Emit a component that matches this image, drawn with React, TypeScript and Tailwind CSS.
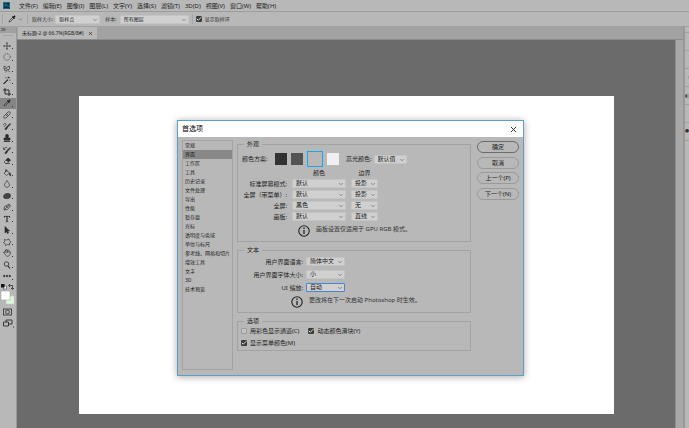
import type { ReactNode } from "react";
import clsx from "clsx";
import { Check, ChevronDown, X } from "lucide-react";

const menus = [
  "文件(F)",
  "编辑(E)",
  "图像(I)",
  "图层(L)",
  "文字(Y)",
  "选择(S)",
  "滤镜(T)",
  "3D(D)",
  "视图(V)",
  "窗口(W)",
  "帮助(H)",
];

const categories = [
  "常规",
  "界面",
  "工作区",
  "工具",
  "历史记录",
  "文件处理",
  "导出",
  "性能",
  "暂存盘",
  "光标",
  "透明度与色域",
  "单位与标尺",
  "参考线、网格和切片",
  "增效工具",
  "文字",
  "3D",
  "技术预览",
];

const screenModes = [
  { label: "标准屏幕模式:", color: "默认", border: "投影" },
  { label: "全屏（带菜单）:", color: "默认", border: "投影" },
  { label: "全屏:", color: "黑色", border: "无" },
  { label: "画板:", color: "默认", border: "直线" },
];

const swatches = [
  { name: "深色", color: "bg-[#323232]" },
  { name: "中灰", color: "bg-[#535353]" },
  { name: "浅灰", color: "bg-[#b8b8b8]" },
  { name: "亮色", color: "bg-[#f0f0f0]" },
];

const eyedropper = (
  <>
    <path d="M2 14l1-3 6-6 2 2-6 6z" fill="none" />
    <path d="M8 4l4 4 1-1-1-1 2-2c1-2-1-3-2-2l-2 2-1-1z" />
  </>
);

const tools: { name: string; art: ReactNode }[] = [
  {
    name: "移动",
    art: (
      <>
        <path d="M8 2v12M2 8h12" />
        <path d="M8 0l2 3H6zM8 16l2-3H6zM0 8l3-2v4zM16 8l-3-2v4z" stroke="none" />
      </>
    ),
  },
  { name: "椭圆选框", art: <circle cx="8" cy="8" r="6.5" fill="none" strokeDasharray="2.6 1.6" /> },
  {
    name: "快速套索",
    art: (
      <path d="M2 2l5 3 6-3v6l-4 2-2-3-5 1zM4 8c-3 2 0 4 2 3s1 3-1 4M9 10l5 4" fill="none" />
    ),
  },
  {
    name: "魔棒",
    art: (
      <>
        <path d="M1 15l8-8 1 1-8 8z" />
        <path d="M11 1v4M9 3h5M14 7v3M6 2v3M13 12l1 1" fill="none" />
      </>
    ),
  },
  { name: "裁剪", art: <path d="M4 0v12h12M0 4h12v12" fill="none" strokeWidth="2" /> },
  { name: "吸管", art: eyedropper },
  {
    name: "修复画笔",
    art: <path d="M2 10l8-8c3-2 6 1 4 4l-8 8c-3 2-6-1-4-4zM5 7l4 4M7 5l4 4M7 8h2" fill="none" />,
  },
  {
    name: "画笔",
    art: (
      <>
        <path d="M6 11l8-8 1 1-7 8zM4 15c0-3 2-4 4-3 0 2-1 3-4 3z" />
        <path d="M1 6c0-4 5-4 5-1s-4 2-4 5" fill="none" />
      </>
    ),
  },
  { name: "仿制图章", art: <path d="M6 8L5 3c0-3 6-3 6 0l-1 5h4v4H2V8zM2 14h12v1H2z" /> },
  {
    name: "历史画笔",
    art: (
      <>
        <path d="M6 11l8-8 1 1-7 8zM4 15c0-3 2-4 4-3 0 2-1 3-4 3z" />
        <path d="M1 3v4h4M2 6c1-4 5-4 7-2" fill="none" />
      </>
    ),
  },
  {
    name: "橡皮擦",
    art: (
      <>
        <path d="M6 6l4-4 5 4-4 4z" />
        <path d="M6 6l-4 4 3 3h3l3-3M5 13h9" fill="none" />
      </>
    ),
  },
  {
    name: "油漆桶",
    art: (
      <>
        <path d="M2 8l6-5 5 5-6 5zM5 6V2c0-2 3-1 3 1v3" fill="none" />
        <path d="M13 8c3 1 3 4 2 6-2-1-2-3-2-6z" />
      </>
    ),
  },
  { name: "模糊", art: <path d="M8 1c2 4 5 6 5 9 0 6-10 6-10 0 0-3 3-5 5-9z" fill="none" /> },
  {
    name: "海绵",
    art: <path d="M2 6c2-3 9-4 12-2 1 3 1 6-1 8-3 1-8 2-11 0-1-2-1-4 0-6z" fill="#444" />,
  },
  {
    name: "钢笔",
    art: (
      <>
        <path d="M2 14l1-7 6-3 4 4-4 5zM2 14l5-5M10 3l4 4 1-2-3-3z" fill="none" />
        <circle cx="8" cy="8" r="1" />
      </>
    ),
  },
  {
    name: "文字",
    art: <path d="M2 2h12v3h-1l-1-2H9v10l2 1H5l2-1V3H4L3 5H2z" strokeWidth="0.3" />,
  },
  { name: "路径选择", art: <path d="M4 1l9 9H9l2 4-2 1-2-4-3 3z" /> },
  {
    name: "自定形状",
    art: <path d="M3 3l4 1 5-2 1 3 3 3-3 2v4l-4-1-4 2-1-4-3-2 3-3z" fill="none" />,
  },
  {
    name: "抓手",
    art: (
      <path
        d="M4 10L1 7c0-2 2-1 3 0V4c0-2 2-2 2 0V2c0-2 2-2 3 0v1c1-2 3-1 3 1v1c2-1 3 0 3 2-1 9-8 10-11 3zM6 4v4M9 3v5M12 5v3"
        fill="none"
      />
    ),
  },
  {
    name: "缩放",
    art: (
      <>
        <circle cx="7" cy="6" r="4.5" fill="none" strokeWidth="1.6" />
        <path d="M10 10l4 5" strokeWidth="2.4" />
      </>
    ),
  },
  {
    name: "更多",
    art: (
      <>
        <circle cx="2.5" cy="8" r="1.6" />
        <circle cx="8" cy="8" r="1.6" />
        <circle cx="13.5" cy="8" r="1.6" />
      </>
    ),
  },
];

const Glyph = ({ children, className = "size-2" }: { children: ReactNode; className?: string }) => (
  <svg
    viewBox="0 0 16 16"
    className={className}
    fill="currentColor"
    stroke="currentColor"
    strokeWidth="1.3"
    aria-hidden="true"
  >
    {children}
  </svg>
);

type DropdownProps = {
  label: string;
  value: string;
  width: string;
  focused?: boolean;
  small?: boolean;
};

const Dropdown = ({ label, value, width, focused, small }: DropdownProps) => (
  <span className={clsx("relative block shrink-0", width)}>
    <select
      aria-label={label}
      className={clsx(
        "block h-[9px] w-full appearance-none rounded-[1px] border bg-[#d0d0d0] pl-[3px] leading-[7px] text-[#151515] outline-none",
        small ? "text-[5px]" : "text-[6px]",
        focused ? "border-[#4a86cf]" : "border-[#c4c4c4]"
      )}
    >
      <option>{value}</option>
    </select>
    <ChevronDown className="pointer-events-none absolute right-[2px] top-[2px] size-[6px] text-[#444]" />
  </span>
);

const Checkbox = ({ label, checked }: { label: string; checked?: boolean }) => (
  <label className="flex h-2 items-center gap-[3px] whitespace-nowrap">
    <span className="relative block size-[6px]">
      <input
        type="checkbox"
        defaultChecked={checked}
        className="peer block size-[6px] appearance-none rounded-[1px] border border-[#9a9a9a] bg-[#c4c4c4] checked:border-[#3a3a3a] checked:bg-[#3a3a3a]"
      />
      <Check
        strokeWidth={4}
        className="pointer-events-none absolute inset-0 hidden size-[6px] text-[#e4e4e4] peer-checked:block"
      />
    </span>
    {label}
  </label>
);

const Group = ({ title, children }: { title: string; children: ReactNode }) => (
  <fieldset className="min-w-0 border border-[#a3a3a3]">
    <legend className="ml-[6px] px-[3px] leading-[8px]">{title}</legend>
    {children}
  </fieldset>
);

const Info = ({ children }: { children: ReactNode }) => (
  <div className="flex h-[13px] items-start gap-[6px] whitespace-nowrap text-[#333]">
    <svg viewBox="0 0 12 12" className="size-3 shrink-0 text-[#222]" fill="none" stroke="currentColor" aria-hidden="true">
      <circle cx="6" cy="6" r="5.2" strokeWidth="1.1" />
      <path d="M6 5v4M6 2.6v1.3" strokeWidth="1.3" />
    </svg>
    <p className="leading-[8px]">{children}</p>
  </div>
);

const MenuBar = () => (
  <nav className="flex h-[11px] items-center pl-[3px] text-[6px] leading-[8px] text-[#222]">
    <svg viewBox="0 0 14 14" className="mr-2 size-[7px]" aria-label="Photoshop">
      <rect width="14" height="14" fill="#0a2433" />
      <rect x="0.7" y="0.7" width="12.6" height="12.6" fill="none" stroke="#1f9cc4" strokeWidth="1.2" />
      <path d="M4 10.5V3.8h2c2.5 0 2.5 3.4 0 3.4H4" fill="none" stroke="#2bb6e8" />
      <path d="M11 6.2c-2.5-.7-2.5 1.4-1 1.7 1.8.4 1 2.6-1.6 1.8" fill="none" stroke="#2bb6e8" />
    </svg>
    <div className="flex items-center gap-[3px]">
      {menus.map((menu) => (
        <button key={menu} type="button" className="px-px whitespace-nowrap">
          {menu}
        </button>
      ))}
    </div>
  </nav>
);

const OptionsBar = () => (
  <div className="flex h-[15px] items-center border-t border-[#9d9d9d] pl-[2px] text-[5px] leading-[8px] text-[#333]">
    <span className="mr-[5px] h-[10px] w-px bg-[#a6a6a6]" />
    <Glyph className="size-2 text-[#222]">{eyedropper}</Glyph>
    <ChevronDown className="ml-[2px] size-[5px]" />
    <span className="mx-1 h-[10px] w-px bg-[#a6a6a6]" />
    <span className="mr-[2px] whitespace-nowrap">取样大小:</span>
    <Dropdown label="取样大小" value="取样点" width="w-[45px]" small />
    <span className="ml-[5px] mr-[3px] whitespace-nowrap">样本:</span>
    <Dropdown label="样本" value="所有图层" width="w-[69px]" small />
    <span className="mx-[3px] h-[10px] w-px bg-[#a6a6a6]" />
    <Checkbox label="显示取样环" checked />
  </div>
);

const Toolbar = () => (
  <aside className="flex w-[17px] shrink-0 flex-col border-r border-[#989898] bg-[#b8b8b8] text-[#2b2b2b]">
    <div className="h-[6px] bg-[#a0a0a0] pl-px">
      <svg viewBox="0 0 10 10" className="size-[5px]" fill="none" stroke="currentColor" strokeWidth="1.6" aria-hidden="true">
        <path d="M1 2l3 3-3 3M5 2l3 3-3 3" />
      </svg>
    </div>
    <div className="mx-[3px] mt-[2px] mb-1 h-px bg-[#a3a3a3]" />
    <div className="flex h-[242px] flex-col">
      {tools.map((tool) => (
        <button
          key={tool.name}
          type="button"
          aria-label={tool.name}
          className={clsx(
            "flex flex-1 items-center pl-[3px]",
            tool.name === "吸管" && "bg-[#858585]"
          )}
        >
          <Glyph>{tool.art}</Glyph>
          <span className="mt-[6px] ml-px size-px bg-[#333]" />
        </button>
      ))}
    </div>
    <svg viewBox="0 0 16 48" className="h-12 w-4" fill="none" stroke="currentColor" aria-hidden="true">
      <rect x="3.5" y="4" width="3" height="3" fill="#fff" strokeWidth="0.5" />
      <rect x="1" y="2" width="3.5" height="3.5" fill="#111" stroke="none" />
      <path d="M9 3.5h3.500V7M10 2L8.500 3.500 10 5M11 6l1.500 1.500L14 6" strokeWidth="0.8" />
      <rect x="6" y="14" width="8" height="8" fill="#dcf7dc" stroke="#b8cdb8" strokeWidth="0.5" />
      <rect x="1" y="9" width="9" height="9" fill="#fff" stroke="#999" strokeWidth="0.5" />
      <rect x="3.5" y="27" width="8" height="6" strokeWidth="0.8" />
      <circle cx="7.5" cy="30" r="1.9" strokeWidth="0.8" />
      <path d="M3.500 40h5v4h-5zM6 40v-2h6v4H8.500" strokeWidth="0.9" />
      <path d="M13 45h1" />
    </svg>
  </aside>
);

const PanelDock = () => (
  <aside className="flex w-[6px] shrink-0 flex-col border-l-2 border-[#979797] bg-[#b8b8b8] pt-[5px]">
    {["", "", "⁝", "◧", "", "●"].map((mark, i) => (
      <div
        key={i}
        className="flex h-[18px] items-center justify-end overflow-hidden border-t border-[#a1a1a1] text-[4px] leading-[6px] text-[#333]"
      >
        {mark}
      </div>
    ))}
    <div className="border-t border-[#a1a1a1]" />
  </aside>
);

const Workspace = () => (
  <div className="flex min-w-0 flex-1 flex-col">
    <div className="flex h-[13px] shrink-0 items-end border-b border-[#8d8d8d] bg-[#a2a2a2]">
      <div className="ml-px flex h-3 items-center gap-1 bg-[#b8b8b8] px-1 text-[5px] leading-[8px] whitespace-nowrap text-[#222]">
        未标题-2 @ 66.7%(RGB/8#)
        <button type="button" aria-label="关闭文档">
          <X strokeWidth={3} className="size-[5px]" />
        </button>
      </div>
    </div>
    <div className="flex flex-1">
      <main className="flex flex-1 bg-[#6b6b6b] pt-14 pr-[61px] pb-[14px] pl-[62px]">
        <div className="flex-1 bg-white" />
      </main>
      <div className="w-2 border-l border-[#8d8d8d] bg-[#a8a8a8]" />
    </div>
  </div>
);

const Preferences = () => (
  <section
    role="dialog"
    aria-labelledby="prefs-title"
    className="absolute top-[120px] left-[177px] w-[347px] border border-[#5f9dcb] bg-[#b8b8b8] text-[6px] leading-[8px] text-[#222] shadow-[0_1px_7px_rgba(0,0,0,0.35)]"
  >
    <header className="flex h-4 items-center justify-between bg-white pr-[5px] pl-1">
      <h1 id="prefs-title" className="text-[7px] text-black">
        首选项
      </h1>
      <button type="button" aria-label="关闭">
        <X strokeWidth={2.5} className="size-[9px] text-[#222]" />
      </button>
    </header>
    <div className="flex pt-[3px] pr-1 pb-[5px] pl-1">
      <ul className="w-[51px] shrink-0 border border-[#a3a3a3] text-[5px]">
        {categories.map((category) => (
          <li key={category} className={clsx(category === "界面" && "bg-[#888]")}>
            <button
              type="button"
              className="block h-[9px] w-full pl-[2px] text-left leading-[9px] whitespace-nowrap"
            >
              {category}
            </button>
          </li>
        ))}
      </ul>
      <div className="ml-1 flex min-h-[230px] min-w-0 flex-1 flex-col gap-1">
        <Group title="外观">
          <div className="mt-[3px] flex h-4 items-center pl-1">
            <span className="w-[33px] whitespace-nowrap">颜色方案:</span>
            <div className="flex items-center gap-1">
              {swatches.map((swatch, i) => (
                <button
                  key={swatch.name}
                  type="button"
                  aria-label={swatch.name}
                  className={clsx(
                    swatch.color,
                    i === 2 ? "size-4 border border-[#1fa6e6]" : "size-3"
                  )}
                />
              ))}
            </div>
            <span className="mr-[2px] ml-[7px] whitespace-nowrap">高光颜色:</span>
            <Dropdown label="高光颜色" value="默认值" width="w-[33px]" />
          </div>
          <div className="mt-[3px] grid grid-cols-[49px_54px_27px] items-center gap-x-[5px] gap-y-[2px] text-right">
            <span />
            <span className="text-center leading-[7px]">颜色</span>
            <span className="text-center leading-[7px]">边界</span>
            {screenModes.map((mode) => (
              <div key={mode.label} className="contents">
                <span className="whitespace-nowrap">{mode.label}</span>
                <Dropdown label={mode.label + "颜色"} value={mode.color} width="w-full" />
                <Dropdown label={mode.label + "边界"} value={mode.border} width="w-full" />
              </div>
            ))}
          </div>
          <div className="mt-1 pb-[3px] pl-[60px]">
            <Info>画板设置仅适用于 GPU RGB 模式。</Info>
          </div>
        </Group>
        <Group title="文本">
          <div className="mt-[3px] grid grid-cols-[65px_39px] items-center gap-x-[3px] gap-y-1 text-right">
            <span>用户界面语言:</span>
            <Dropdown label="用户界面语言" value="简体中文" width="w-full" />
            <span>用户界面字体大小:</span>
            <Dropdown label="用户界面字体大小" value="小" width="w-full" />
            <span>UI 缩放:</span>
            <Dropdown label="UI 缩放" value="自动" width="w-full" focused />
          </div>
          <div className="mt-1 pb-[3px] pl-[53px]">
            <Info>更改将在下一次启动 Photoshop 时生效。</Info>
          </div>
        </Group>
        <Group title="选项">
          <div className="mt-[2px] flex flex-col gap-1 pb-[3px] pl-[3px]">
            <div className="flex gap-[9px]">
              <Checkbox label="用彩色显示通道(C)" />
              <Checkbox label="动态颜色滑块(Y)" checked />
            </div>
            <Checkbox label="显示菜单颜色(M)" checked />
          </div>
        </Group>
      </div>
      <div className="mt-px ml-[6px] flex h-[59px] w-[42px] shrink-0 flex-col justify-between">
        <button type="button" className="h-3 rounded-full border border-[#6c6c6c] leading-[8px]">
          确定
        </button>
        <button type="button" className="h-3 rounded-full border border-[#9a9a9a] leading-[8px]">
          取消
        </button>
        <button type="button" className="h-3 rounded-full border border-[#9a9a9a] leading-[8px]">
          上一个(P)
        </button>
        <button type="button" className="h-3 rounded-full border border-[#9a9a9a] leading-[8px]">
          下一个(N)
        </button>
      </div>
    </div>
  </section>
);

export default function App() {
  return (
    <div className="relative flex min-h-screen flex-col bg-[#b8b8b8] font-['Noto_Sans','Noto_Sans_CJK_SC',sans-serif]">
      <MenuBar />
      <OptionsBar />
      <div className="flex flex-1 border-t border-[#a0a0a0]">
        <Toolbar />
        <Workspace />
        <PanelDock />
      </div>
      <Preferences />
    </div>
  );
}
